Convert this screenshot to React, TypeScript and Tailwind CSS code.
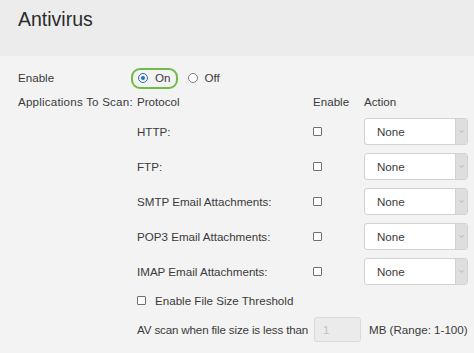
import { ChevronDown } from "lucide-react";

const protocols = [
  "HTTP:",
  "FTP:",
  "SMTP Email Attachments:",
  "POP3 Email Attachments:",
  "IMAP Email Attachments:",
];

function Checkbox() {
  return <span className="inline-block shrink-0 w-[9px] h-[9px] border border-[#6f6f6f] rounded-[1px] bg-white" />;
}

function Select() {
  return (
    <div className="flex shrink-0 w-[104px] h-[27px] border border-[#d2d2d2] rounded-[3px] bg-white overflow-hidden">
      <span className="flex-1 pl-[12px] flex items-center">None</span>
      <span className="w-[12px] bg-[#dedede] border-l border-[#d2d2d2] flex items-center justify-center text-[#9a9a9a]">
        <ChevronDown size={7} strokeWidth={2} />
      </span>
    </div>
  );
}

export default function App() {
  return (
    <div
      className="w-[474px] h-[353px] bg-[#f3f3f3] text-[#3a3a3a] text-[11.6px] overflow-hidden whitespace-nowrap"
      style={{ fontFamily: '"Liberation Sans", Arial, sans-serif' }}
    >
      {/* Page header */}
      <div className="h-[56px] bg-[#ececec] pl-[18px] pt-[5px]">
        <h1 className="text-[19.5px] text-[#2b2b2b]">Antivirus</h1>
      </div>

      <div className="px-[18px] pt-[10px]">
        {/* Enable */}
        <div className="flex items-center h-[24px]">
          <span className="w-[113px] shrink-0">Enable</span>
          <div className="flex items-center h-[21px] border-2 border-[#72bb47] rounded-[9px] pl-[5px] pr-[6px]">
            <span className="w-[10px] h-[10px] rounded-full border border-[#2a6ebb] flex items-center justify-center">
              <span className="w-[4px] h-[4px] rounded-full bg-[#2a6ebb]" />
            </span>
            <span className="ml-[7px]">On</span>
          </div>
          <span className="ml-[10px] w-[10px] h-[10px] rounded-full border border-[#7a7a7a] bg-white" />
          <span className="ml-[6px]">Off</span>
        </div>

        {/* Header row */}
        <div className="flex items-center h-[24px]">
          <span className="w-[119px] shrink-0 tracking-[0.2px]">Applications To Scan:</span>
          <span className="w-[176px] shrink-0">Protocol</span>
          <span className="w-[51px] shrink-0">Enable</span>
          <span>Action</span>
        </div>

        {protocols.map((p) => (
          <div key={p} className="flex items-center h-[35px]">
            <span className="w-[119px] shrink-0" />
            <span className="w-[176px] shrink-0">{p}</span>
            <span className="w-[51px] shrink-0 flex items-center">
              <Checkbox />
            </span>
            <Select />
          </div>
        ))}

        {/* File size threshold */}
        <div className="flex items-center h-[23px]">
          <span className="w-[119px] shrink-0" />
          <Checkbox />
          <span className="ml-[9px]">Enable File Size Threshold</span>
        </div>

        <div className="flex items-center h-[35px]">
          <span className="w-[119px] shrink-0" />
          <span className="w-[177px] shrink-0 tracking-[-0.15px]">AV scan when file size is less than</span>
          <span className="w-[47px] h-[25px] shrink-0 bg-[#ebebeb] border border-[#dadada] rounded-[3px] pl-[8px] flex items-center text-[#c2c2c2]">
            1
          </span>
          <span className="ml-[8px]">MB (Range: 1-100)</span>
        </div>
      </div>
    </div>
  );
}
